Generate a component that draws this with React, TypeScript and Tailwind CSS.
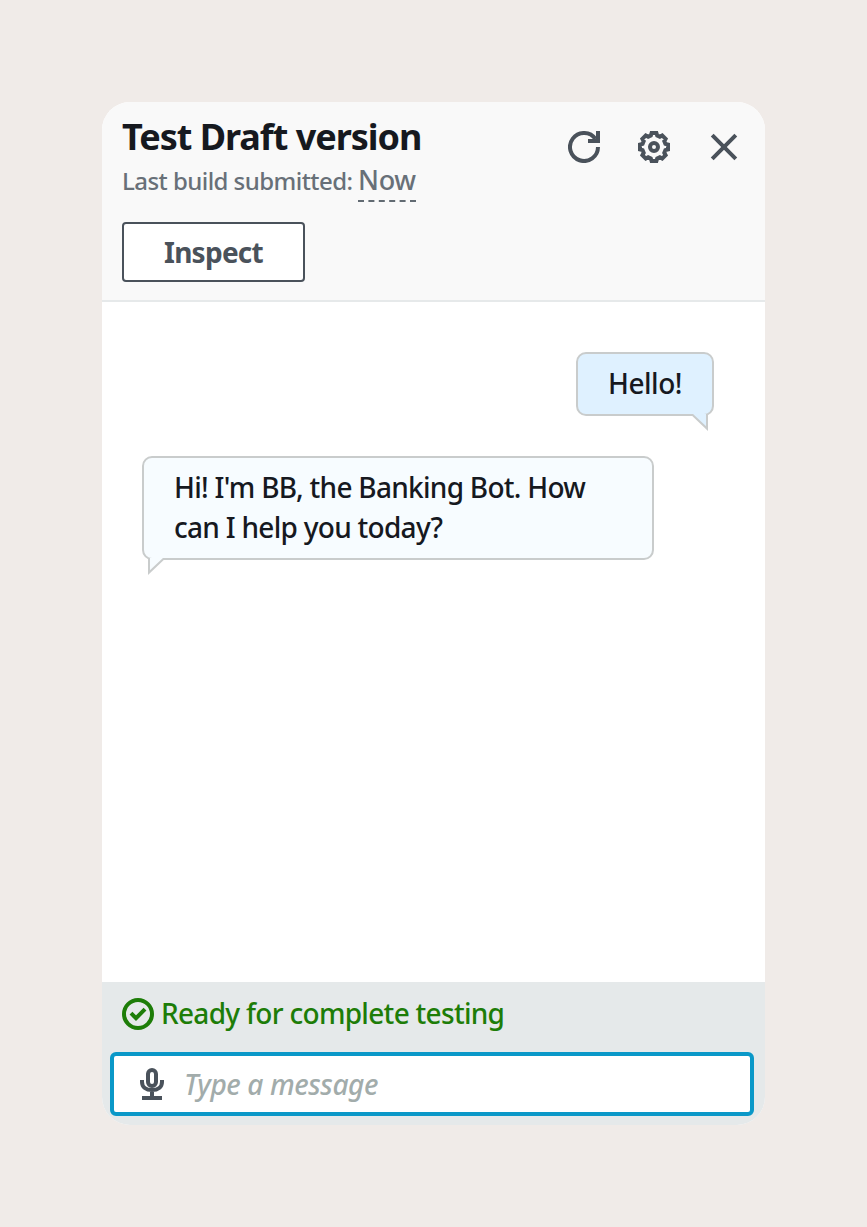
import { useState, type ReactNode } from 'react'

type Message = {
  from: 'user' | 'bot'
  text: string
}

const messages: Message[] = [
  { from: 'user', text: 'Hello!' },
  { from: 'bot', text: "Hi! I'm BB, the Banking Bot. How can I help you today?" },
]

function RefreshIcon() {
  return (
    <svg viewBox="0 0 32 32" className="size-8" fill="none" stroke="currentColor" strokeWidth="4">
      <path d="M30 16A14 14 0 1 1 27.5 8" />
      <path d="M20 10H30V0" />
    </svg>
  )
}

function GearIcon() {
  return (
    <svg viewBox="0 0 32 32" className="size-8" fill="none" stroke="currentColor" strokeWidth="4">
      <path d="M12.8 4.6 13.6 2h4.8l.8 2.6 2.6 1.1 2.4-1.3 3.4 3.4-1.3 2.4 1.1 2.6 2.6.8v4.8l-2.6.8-1.1 2.6 1.3 2.4-3.4 3.4-2.4-1.3-2.6 1.1-.8 2.6h-4.8l-.8-2.6-2.6-1.1-2.4 1.3-3.4-3.4 1.3-2.4-1.1-2.6-2.6-.8v-4.8l2.6-.8 1.1-2.6-1.3-2.4 3.4-3.4 2.4 1.3z" />
      <circle cx="16" cy="16" r="4" />
    </svg>
  )
}

function CloseIcon() {
  return (
    <svg viewBox="0 0 32 32" className="size-8" fill="none" stroke="currentColor" strokeWidth="4">
      <path d="M4.2 4.2 27.8 27.8M27.8 4.2 4.2 27.8" />
    </svg>
  )
}

function CheckCircleIcon() {
  return (
    <svg viewBox="0 0 32 32" className="size-8" fill="none" stroke="currentColor" strokeWidth="4">
      <circle cx="16" cy="16" r="14" />
      <path d="M9 15.2 14 20.2 23 11.2" />
    </svg>
  )
}

function MicIcon() {
  return (
    <svg viewBox="0 0 24 32" className="h-8 w-6" fill="none" stroke="currentColor" strokeWidth="4">
      <rect x="8" y="2" width="8" height="16" rx="4" />
      <path d="M2 12v2c0 5 4 8 10 8s10-3 10-8v-2M12 22v8M2 30h20" />
    </svg>
  )
}

function IconButton({ label, children }: { label: string; children: ReactNode }) {
  return (
    <button aria-label={label} className="text-[#4a525b]">
      {children}
    </button>
  )
}

function Bubble({ message }: { message: Message }) {
  const mine = message.from === 'user'
  return (
    <div
      className={`relative rounded-[10px] border-2 border-[#c9cccc] px-[30px] pt-[9px] text-[28px] leading-10 font-medium text-[#16191f] ${
        mine ? 'h-16 w-[138px] self-end bg-[#dff1ff]' : 'h-26 w-[512px] bg-[#f7fcff]'
      }`}
    >
      <p className={mine ? 'tracking-[-0.5px] whitespace-nowrap' : 'w-[430px] tracking-[-0.72px]'}>{message.text}</p>
      {/* tail */}
      <svg
        viewBox="0 0 18 18"
        className={`absolute top-full h-[18px] w-[18px] ${mine ? 'right-1' : 'left-1 -scale-x-100'}`}
        fill={mine ? '#dff1ff' : '#f7fcff'}
      >
        <path d="M0 0H17V15.4L1.6 0z" />
        <path d="M1.6 0 17 14.6V0" fill="none" stroke="#c9cccc" strokeWidth="2" />
      </svg>
    </div>
  )
}

export default function App() {
  const [draft, setDraft] = useState('')

  return (
    <main className="flex h-[1227px] w-[867px] justify-center bg-[#f0ebe8] pt-[102px] font-['Noto_Sans','Open_Sans',sans-serif]">
      <section className="flex h-[1023px] w-[663px] flex-col overflow-hidden rounded-[28px] bg-white">
        <header className="flex h-[200px] shrink-0 justify-between border-b-2 border-[#e6e9ea] bg-[#f9f9f9] px-5">
          <div>
            <h1 className="mt-[11px] h-[47px] text-[36px] leading-12 font-bold tracking-[-1.03px] whitespace-nowrap text-[#16191f]">
              Test Draft version
            </h1>
            <p className="flex h-10 items-baseline text-[24px] leading-10 font-medium whitespace-nowrap text-[#687078]">
              <span className="w-[236px] tracking-[-0.55px]">Last build submitted:</span>
              <span className="text-[27px] tracking-[-0.3px]">Now</span>
            </p>
            <svg className="block h-0.5 w-[294px]" viewBox="0 0 294 2">
              <path d="M236 1h58" stroke="#626b73" strokeWidth="2" strokeDasharray="6 4.4" />
            </svg>
            <button className="mt-5 h-15 w-[183px] rounded-[4px] border-2 border-[#4a525b] bg-white text-[28px] font-bold tracking-[-0.75px] text-[#4a525b]">
              Inspect
            </button>
          </div>
          <div className="mt-[29px] mr-[5px] flex h-8 gap-[38px]">
            <IconButton label="Refresh">
              <RefreshIcon />
            </IconButton>
            <IconButton label="Settings">
              <GearIcon />
            </IconButton>
            <IconButton label="Close">
              <CloseIcon />
            </IconButton>
          </div>
        </header>

        <div className="flex flex-1 flex-col gap-10 pt-[50px] pr-[51px] pl-10">
          {messages.map((m, i) => (
            <Bubble key={i} message={m} />
          ))}
        </div>

        <footer className="h-[143px] shrink-0 bg-[#e5e9ea] pr-[11px] pl-2">
          <div className="ml-3 flex h-[70px] items-center gap-[7px] pb-1.5 text-[28px] whitespace-nowrap text-[#1d7d08]">
            <CheckCircleIcon />
            <span className="pb-0.5 font-medium tracking-[-0.7px]">Ready for complete testing</span>
          </div>
          <div className="flex h-16 items-center rounded-[6px] border-4 border-[#0a98c8] bg-white pl-[26px] text-[#4a525b]">
            <MicIcon />
            <input
              value={draft}
              onChange={(e) => setDraft(e.target.value)}
              placeholder="Type a message"
              className="ml-5 min-w-0 flex-1 text-[28px] font-medium tracking-[-0.4px] text-[#16191f] outline-none placeholder:text-[#a2acab] placeholder:italic"
            />
          </div>
        </footer>
      </section>
    </main>
  )
}
